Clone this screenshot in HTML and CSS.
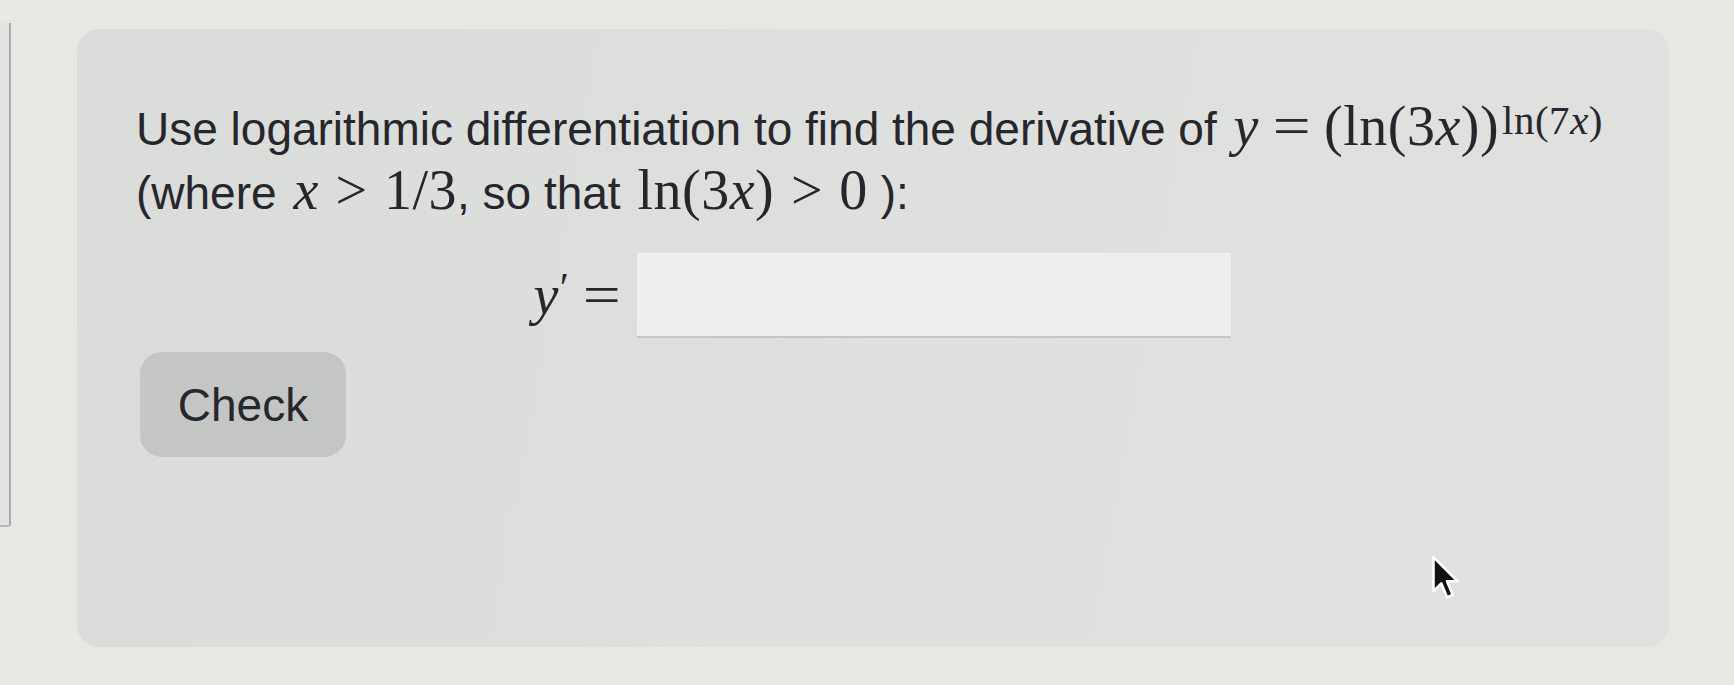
FILE: index.html
```html
<!DOCTYPE html>
<html lang="en">
<head>
<meta charset="utf-8">
<title>Logarithmic differentiation</title>
<link rel="stylesheet" href="styles.css">
</head>
<body>
<div class="page">
  <div class="edge"></div>
  <main class="card">
    <p class="q">Use logarithmic differentiation to find the derivative of <span class="m"><i>y</i><span class="rel eq">=</span>(ln(3<i>x</i>))<span class="sup">ln(7<i>x</i>)</span></span><br>(where <span class="m"><i>x</i><span class="rel">&gt;</span>1/3</span>, so that <span class="m">ln(3<i>x</i>)<span class="rel">&gt;</span>0</span> ):</p>
    <div class="answer">
      <span class="m lhs"><i>y</i><span class="prime">′</span><span class="rel eq">=</span></span>
      <input class="box" type="text" aria-label="y prime">
    </div>
    <button class="check" type="button">Check</button>
  </main>
  <svg class="cursor" width="29" height="46" viewBox="0 0 13 21" aria-hidden="true">
    <path d="M1 1 L1 16.5 L4.6 13 L7.2 19.3 L9.8 18.2 L7.2 12 L12 12 Z" fill="#111" stroke="#fff" stroke-width="1.2" stroke-linejoin="round"/>
  </svg>
</div>
</body>
</html>
```

FILE: styles.css
```css
html, body {
  margin: 0;
  padding: 0;
}

body {
  background: #e8e7e4;
  font-family: "Liberation Sans", Arial, sans-serif;
  color: #26262c;
  overflow: hidden;
}

.page {
  position: relative;
  display: flex;
  align-items: flex-start;
  width: 1734px;
  height: 685px;
}

.edge {
  flex: none;
  width: 9px;
  height: 502px;
  margin-top: 23px;
  background: #e3e2e1;
  border-right: 2px solid #a9a8ad;
  border-bottom: 2px solid #b9b8bc;
  border-bottom-right-radius: 3px;
}

.card {
  flex: none;
  box-sizing: border-box;
  width: 1592px;
  height: 618px;
  margin: 29px 0 0 66px;
  padding: 68px 59px 0 59px;
  background: linear-gradient(100deg, #dadcd9 0%, #dee0dd 50%, #e0e1de 100%);
  border-radius: 22px;
}

.q {
  margin: 0;
  font-size: 46px;
  line-height: 64px;
  white-space: nowrap;
}

.m {
  font-family: "Liberation Serif", "Times New Roman", serif;
  font-size: 56px;
  line-height: 0;
  margin-left: 4px;
  letter-spacing: 0.5px;
}

.m i {
  font-style: italic;
}

.rel {
  display: inline-block;
  padding: 0 0.3em;
  letter-spacing: 0;
}

.eq {
  transform: scaleX(1.2);
}

.sup {
  font-size: 41px;
  vertical-align: 11px;
  margin-left: 3px;
}

.answer {
  display: flex;
  justify-content: center;
  align-items: center;
  height: 86px;
  margin: 27px 0 0 18px;
}

.lhs {
  margin: 0 2px 0 0;
  line-height: 1;
}

.prime {
  font-size: 42px;
  vertical-align: 12px;
  margin-left: 1px;
}

.box {
  box-sizing: border-box;
  width: 594px;
  height: 86px;
  margin: 0;
  background: #eeefed;
  border: none;
  border-top: 1px solid #e2e3e1;
  border-bottom: 2px solid #c6c7c5;
  border-radius: 1px;
  outline: none;
}

.check {
  display: block;
  width: 206px;
  height: 105px;
  margin: 14px 0 0 4px;
  padding: 0;
  background: #c4c6c6;
  border: none;
  border-radius: 22px;
  font-family: "Liberation Sans", Arial, sans-serif;
  font-size: 46px;
  color: #26262c;
}

.cursor {
  position: absolute;
  left: 1431px;
  top: 555px;
}
```
